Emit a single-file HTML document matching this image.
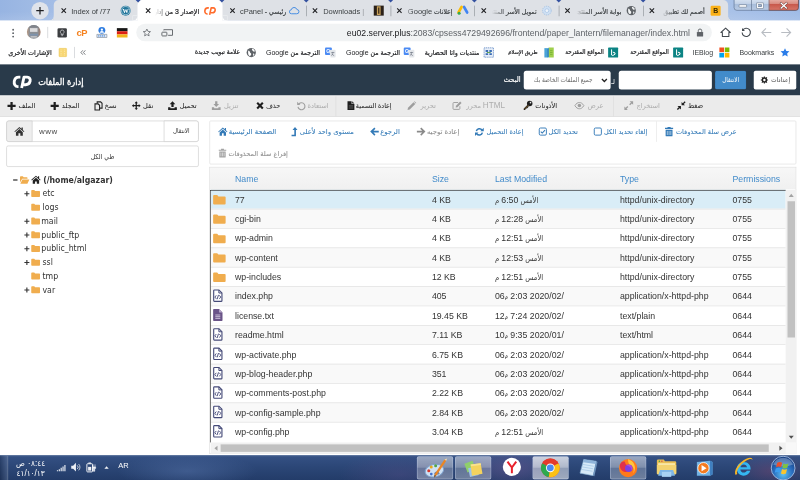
<!DOCTYPE html>
<html lang="ar">
<head>
<meta charset="utf-8">
<title>cPanel File Manager</title>
<style>
*{box-sizing:border-box;margin:0;padding:0}
html,body{width:800px;height:480px;overflow:hidden;background:#fff}
#s{position:absolute;left:0;top:0;width:1280px;height:768px;transform:scale(.625);transform-origin:0 0;overflow:hidden;font-family:"Liberation Sans","DejaVu Sans",sans-serif;font-size:13px;color:#333;background:#fff}
#s div,#s span,#s svg{position:absolute}
.ar{font-family:"Liberation Sans","DejaVu Sans Condensed","DejaVu Sans",sans-serif;font-stretch:condensed;direction:rtl;white-space:nowrap}
.bt.ar,.tt.ar{-webkit-text-stroke:.3px currentColor}
#s span.l{position:static;font-stretch:normal;-webkit-text-stroke:0}
svg{overflow:visible}
/* chrome */
#frame{left:0;top:0;width:1280px;height:33px;background:linear-gradient(180deg,transparent 55%,rgba(255,255,255,.1)),linear-gradient(90deg,#97b4e2 0,#9fbae4 50px,#a3bde6 86px,#a9c2e8 1165px,#a6c0e8 1200px,#9fbbe6 100%)}
#tabsbg{left:86px;top:0;width:1079px;height:33px;background:#dee1e6;border-radius:8px 8px 0 0}
#acttab{left:220px;top:0;width:136px;height:34px;background:#fff;border-radius:8px 8px 0 0}
.tt{top:8.5px;height:18px;line-height:18px;font-size:12px;color:#3c4043;white-space:nowrap;overflow:hidden}
.tx{top:9px;width:16px;height:16px}
.ts{top:9px;width:1px;height:17px;background:#8b9096}
.tri{top:0;width:0;height:0;border-left:4px solid transparent;border-right:4px solid transparent;border-top:4px solid #33509f}
#toolbar{left:0;top:33px;width:1280px;height:35px;background:#fff}
#pill{left:218px;top:38px;width:921px;height:28px;border-radius:14px;background:#f1f3f4}
#url{top:43px;right:176px;height:18px;line-height:18px;font-size:13.9px;color:#5f6368;white-space:nowrap;direction:ltr}
#url b{font-weight:normal;color:#202124}
#bm{left:0;top:68px;width:1280px;height:35px;background:#fff}
.bt{top:75px;height:18px;line-height:18px;font-size:11.2px;color:#3c4043;white-space:nowrap}
.bt.ar{font-size:11px;color:#202124}
.bt .l{font-size:11.2px}
.tt.ar{font-size:11px}
.tt .l{font-size:12px}
/* cpanel */
#cphead{left:0;top:103px;width:1280px;height:50px;background:#293a4a}
#acts{left:0;top:153px;width:1280px;height:34px;background:#ebebeb;border-top:1px solid #f8f8f8;border-bottom:1px solid #dcdcdc}
.a{top:160px;width:200px;text-align:center;height:18px;line-height:18px;font-size:10.6px;color:#222;white-space:nowrap;font-family:"Liberation Sans","DejaVu Sans",sans-serif !important;font-stretch:normal !important;-webkit-text-stroke:.05px currentColor !important}
.a .l{font-size:13px}
.d{color:#adadad}
.vs{top:154px;width:1px;height:32px;background:#dadada}
.nl{height:18px;line-height:18px;font-size:11px;font-family:"DejaVu Sans",sans-serif !important;font-stretch:normal !important;-webkit-text-stroke:.1px currentColor !important;color:#337ab7;white-space:nowrap}
.tr{height:22px;line-height:22px;font-family:"DejaVu Sans","Liberation Sans",sans-serif;font-size:12.5px;color:#333;white-space:nowrap}
.th{top:277px;height:18px;line-height:18px;font-size:14px;color:#428bca;white-space:nowrap}
.row{left:337px;width:920px;height:31px;border-top:1px solid #ddd}
#s span.m{position:static;unicode-bidi:isolate;font-size:9px}
.c.ar{font-size:12px;direction:rtl}
.c .l{font-size:14px}
.c{top:6px;height:18px;line-height:18px;font-size:14px;color:#333;white-space:nowrap}
#taskbar{left:0;top:728px;width:1280px;height:40px;background:linear-gradient(180deg,#9fb0c8 0,#4b6592 1px,#345083 3px,#2b4676 50%,#233c69 100%)}
.tb{top:730px;width:58px;height:37px;border:1px solid rgba(200,215,240,.55);border-radius:3px;background:linear-gradient(180deg,rgba(255,255,255,.5),rgba(255,255,255,.4) 47%,rgba(255,255,255,.26) 52%,rgba(255,255,255,.34))}
</style>
</head>
<body>
<div id="s">
<!-- ===== Browser chrome ===== -->
<div id="frame"></div>
<div id="tabsbg"></div>
<div id="acttab"></div>
<!--TABS-->
<div style="left:78px;top:25px;width:8px;height:8px;background:radial-gradient(circle at 0 0,transparent 7.500px,#dee1e6 8.500px)"></div>
<div style="left:1165px;top:25px;width:8px;height:8px;background:radial-gradient(circle at 100% 0,transparent 7.500px,#dee1e6 8.500px)"></div>
<div style="left:212px;top:25px;width:8px;height:8px;background:#fff"></div>
<div style="left:212px;top:25px;width:8px;height:8px;background:#dee1e6;border-radius:0 0 8px 0"></div>
<div style="left:356px;top:25px;width:8px;height:8px;background:#fff"></div>
<div style="left:356px;top:25px;width:8px;height:8px;background:#dee1e6;border-radius:0 0 0 8px"></div>
<!-- new tab button -->
<div style="left:50px;top:3px;width:28px;height:28px;border-radius:14px;background:#dfe3ea"></div>
<svg style="left:57px;top:10px" width="14" height="14" viewBox="0 0 14 14"><path d="M7 1v12M1 7h12" stroke="#202124" stroke-width="2" fill="none"/></svg>
<!-- tab separators -->
<div class="ts" style="left:490px"></div>
<div class="ts" style="left:625px"></div>
<div class="ts" style="left:759px"></div>
<div class="ts" style="left:894px"></div>
<div class="ts" style="left:1029px"></div>
<div class="tri" style="left:217px"></div>
<div class="tri" style="left:351px"></div>
<div class="tri" style="left:486px"></div>
<div class="tri" style="left:621px"></div>
<div class="tri" style="left:755px"></div>
<div class="tri" style="left:890px"></div>
<div class="tri" style="left:1025px"></div>
<!-- tab 1 -->
<svg class="tx" style="left:94px" viewBox="0 0 16 16"><path d="M4.500 4.500l7 7M11.500 4.500l-7 7" stroke="#202124" stroke-width="1.800" fill="none"/></svg>
<div class="tt" style="left:114px;width:76px">Index of /77</div>
<svg style="left:193px;top:9px" width="16" height="16" viewBox="0 0 16 16"><circle cx="8" cy="8" r="8" fill="#21759b"/><circle cx="8" cy="8" r="6.6" fill="none" stroke="#fff" stroke-width=".8"/><text x="8" y="11.6" font-family="Liberation Serif,serif" font-size="10" font-weight="bold" fill="#fff" text-anchor="middle">W</text></svg>
<!-- tab 2 active -->
<svg class="tx" style="left:229px" viewBox="0 0 16 16"><path d="M4.500 4.500l7 7M11.500 4.500l-7 7" stroke="#202124" stroke-width="1.800" fill="none"/></svg>
<div class="tt ar" style="left:248px;width:71px;color:#202124;-webkit-mask-image:linear-gradient(90deg,transparent 0,#000 22px);mask-image:linear-gradient(90deg,transparent 0,#000 22px)">الإصدار 3 من إدارة</div>
<svg style="left:326px;top:11px" width="20" height="13" viewBox="0 0 31 20"><g fill="none" stroke="#ff6c2c" stroke-width="4" stroke-linejoin="round"><path d="M12.600 2.400H10.200C6.200 2.400 3.500 5 2.800 9c-.700 4.500 1.600 8.500 5.600 8.500h1.200"/><path d="M14.600 19.800L18.400 2.400h5.100c3.500 0 5.500 3 4.700 6.500-.800 3.500-3.700 5.600-7.200 5.600h-3.200"/></g></svg>
<!-- tab 3 -->
<svg class="tx" style="left:364px" viewBox="0 0 16 16"><path d="M4.500 4.500l7 7M11.500 4.500l-7 7" stroke="#202124" stroke-width="1.800" fill="none"/></svg>
<div class="tt ar" style="left:382px;width:76px">رئيسي - <span class="l">cPanel</span></div>
<svg style="left:462px;top:9px" width="17" height="16" viewBox="0 0 17 16"><path d="M4.5 13a3.2 3.2 0 0 1-.4-6.4A4.6 4.6 0 0 1 13 6.2 3.4 3.4 0 0 1 12.8 13z" fill="none" stroke="#4a8fe2" stroke-width="1.6"/></svg>
<!-- tab 4 -->
<svg class="tx" style="left:496px" viewBox="0 0 16 16"><path d="M4.500 4.500l7 7M11.500 4.500l-7 7" stroke="#202124" stroke-width="1.800" fill="none"/></svg>
<div class="tt" style="left:517px;width:70px;-webkit-mask-image:linear-gradient(270deg,transparent 0,#000 12px);mask-image:linear-gradient(270deg,transparent 0,#000 12px)">Downloads | T</div>
<div style="left:598px;top:9px;width:16px;height:16px;background:#2a2018"></div>
<div style="left:603px;top:10px;width:6px;height:14px;background:#c9a25a"></div>
<div style="left:605px;top:12px;width:2px;height:10px;background:#3a2a1a"></div>
<!-- tab 5 -->
<svg class="tx" style="left:631px" viewBox="0 0 16 16"><path d="M4.500 4.500l7 7M11.500 4.500l-7 7" stroke="#202124" stroke-width="1.800" fill="none"/></svg>
<div class="tt ar" style="left:644px;width:80px;-webkit-mask-image:linear-gradient(90deg,transparent 0,#000 16px);mask-image:linear-gradient(90deg,transparent 0,#000 16px)">إعلانات <span class="l">Google</span></div>
<svg style="left:732px;top:9px" width="17" height="16" viewBox="0 0 17 16"><path d="M10.5 2.2L15.5 11" stroke="#4285f4" stroke-width="4.2" stroke-linecap="round"/><path d="M6.5 2.2L1.5 11" stroke="#fbbc04" stroke-width="4.2" stroke-linecap="round"/><circle cx="2.6" cy="12" r="2.4" fill="#34a853"/></svg>
<!-- tab 6 -->
<svg class="tx" style="left:766px" viewBox="0 0 16 16"><path d="M4.500 4.500l7 7M11.500 4.500l-7 7" stroke="#202124" stroke-width="1.800" fill="none"/></svg>
<div class="tt ar" style="left:787px;width:72px;-webkit-mask-image:linear-gradient(90deg,transparent 0,#000 22px);mask-image:linear-gradient(90deg,transparent 0,#000 22px)">تمويل الأسر المنتجة</div>
<svg style="left:867px;top:9px" width="16" height="16" viewBox="0 0 16 16"><circle cx="8" cy="8" r="7" fill="#cfe0f3" stroke="#a9c4e4" stroke-width="1.6" stroke-dasharray="2 1.4"/><circle cx="8" cy="8" r="3" fill="#eef4fb" stroke="#9dbbe0" stroke-width="1"/></svg>
<!-- tab 7 -->
<svg class="tx" style="left:900px" viewBox="0 0 16 16"><path d="M4.500 4.500l7 7M11.500 4.500l-7 7" stroke="#202124" stroke-width="1.800" fill="none"/></svg>
<div class="tt ar" style="left:922px;width:72px;-webkit-mask-image:linear-gradient(90deg,transparent 0,#000 22px);mask-image:linear-gradient(90deg,transparent 0,#000 22px)">بوابة الأسر المنتجه</div>
<svg style="left:1002px;top:9px" width="16" height="16" viewBox="0 0 16 16"><circle cx="8" cy="8" r="7.4" fill="#5f6368"/><path d="M3 5c2 0 3 1 3 2.500s2 1 2 3-1.500 3-2.500 3S3 11 3 9zM9 2c2 0 4 1 4.500 3S12 7 11 6 9 4 9 2zM11 9.500c1.500 0 2 .5 2 1.500s-1 2-2 2z" fill="#f1f3f4"/></svg>
<!-- tab 8 -->
<svg class="tx" style="left:1035px" viewBox="0 0 16 16"><path d="M4.500 4.500l7 7M11.500 4.500l-7 7" stroke="#202124" stroke-width="1.800" fill="none"/></svg>
<div class="tt ar" style="left:1058px;width:70px;-webkit-mask-image:linear-gradient(90deg,transparent 0,#000 22px);mask-image:linear-gradient(90deg,transparent 0,#000 22px)">أصمم لك تطبيق اندرويد</div>
<div style="left:1137px;top:9px;width:16px;height:16px;background:#fbb117;border-radius:2px"></div>
<div style="left:1137px;top:9px;width:16px;height:16px;line-height:16px;text-align:center;font-size:11px;font-weight:bold;color:#3a2a00">B</div>
<!-- window controls -->
<div style="left:1174px;top:-3px;width:104px;height:20px;border:1px solid #5d6f8a;border-radius:0 0 5px 5px;background:linear-gradient(180deg,#d9e4f2 0,#c1d1e7 45%,#a9bedb 50%,#b9cbe4 100%)"></div>
<div style="left:1230px;top:-3px;width:48px;height:20px;border:1px solid #6e3b38;border-radius:0 0 5px 0;background:linear-gradient(180deg,#e8b5ac 0,#d98a7f 45%,#c8594c 50%,#d77466 100%)"></div>
<div style="left:1202px;top:0;width:1px;height:17px;background:#5d6f8a"></div>
<div style="left:1182px;top:7px;width:13px;height:5px;background:#fff;border:1px solid #6b7b92;border-radius:1px"></div>
<div style="left:1210px;top:4px;width:12px;height:10px;background:#fff;border:1px solid #6b7b92;border-radius:1px"></div>
<div style="left:1213px;top:7px;width:6px;height:4px;background:#9fb2cf;border:1px solid #6b7b92"></div>
<svg style="left:1248px;top:4px" width="12" height="10" viewBox="0 0 14 12"><path d="M2 1.500l10 9M12 1.500l-10 9" stroke="#5a3030" stroke-width="4.200" stroke-linecap="square"/><path d="M2 1.500l10 9M12 1.500l-10 9" stroke="#fff" stroke-width="2.600" stroke-linecap="square"/></svg>
<!--/TABS-->
<div id="toolbar"></div>
<div id="pill"></div>
<!--TOOLBAR-->
<!-- menu dots -->
<svg style="left:17px;top:45px" width="8" height="16" viewBox="0 0 8 16"><circle cx="4" cy="2.500" r="1.500" fill="#5f6368"/><circle cx="4" cy="8" r="1.500" fill="#5f6368"/><circle cx="4" cy="13.500" r="1.500" fill="#5f6368"/></svg>
<!-- avatar -->
<div style="left:43px;top:40px;width:22px;height:22px;border-radius:11px;overflow:hidden;background:linear-gradient(90deg,#b89a84 0,#8b8f95 22%,#8b8f95 78%,#a57f6e 100%)"><div style="left:0;top:0;width:22px;height:4px;background:#80848b"></div><div style="left:5px;top:5px;width:12px;height:6px;background:#dcdcde"></div><div style="left:4px;top:14px;width:14px;height:3px;background:#7e93ad"></div><div style="left:6px;top:18px;width:10px;height:2px;background:#d0d0d2"></div></div>
<div style="left:76px;top:43px;width:1px;height:18px;background:#c4c7cc"></div>
<!-- extension: dark bulb -->
<div style="left:92px;top:45px;width:15px;height:15px;background:#3b3d40;border-radius:2px"></div>
<svg style="left:95px;top:47px" width="9" height="11" viewBox="0 0 11 13"><path d="M5.500 1a3.600 3.600 0 0 0-2 6.600V10h4V7.600a3.600 3.600 0 0 0-2-6.600z" fill="none" stroke="#e8eaed" stroke-width="1.300"/><path d="M4 12h3" stroke="#e8eaed" stroke-width="1.200"/></svg>
<!-- extension: cP -->
<svg style="left:120px;top:44px" width="22" height="16" viewBox="0 0 22 16"><text x="11" y="13.500" font-family="Liberation Sans,sans-serif" font-size="15" font-weight="bold" fill="#f58220" text-anchor="middle" letter-spacing="-.5">cP</text></svg>
<!-- extension: blue person -->
<svg style="left:154px;top:42px" width="18" height="20" viewBox="0 0 18 20"><circle cx="9" cy="6.500" r="5.500" fill="#2f7de1"/><circle cx="9" cy="5.500" r="1.800" fill="#fff"/><path d="M5.500 10.500a3.500 3 0 0 1 7 0z" fill="#fff"/><path d="M1 13h16v5H1z" fill="#e4e9f0" stroke="#7d8a9c" stroke-width="1"/><path d="M3 15.500h12" stroke="#2f7de1" stroke-width="1.600" stroke-dasharray="2 1"/></svg>
<!-- extension: flag -->
<div style="left:187px;top:45px;width:17px;height:5px;background:#161616"></div>
<div style="left:187px;top:50px;width:17px;height:5px;background:#dd1f14"></div>
<div style="left:187px;top:55px;width:17px;height:5px;background:#f2b41b"></div>
<!-- star + media -->
<svg style="left:228px;top:45px" width="14" height="14" viewBox="0 0 16 16"><path d="M8 1.600l1.950 4.300 4.650.5-3.500 3.150 1 4.600L8 11.800l-4.100 2.350 1-4.600-3.500-3.150 4.650-.5z" fill="none" stroke="#5f6368" stroke-width="1.400" stroke-linejoin="round"/></svg>
<svg style="left:258px;top:46px" width="19" height="13" viewBox="0 0 19 13"><path d="M4 2.500V1.500h14v9h-7" fill="none" stroke="#5f6368" stroke-width="1.500"/><rect x="1" y="5.500" width="8" height="6" rx="1" fill="none" stroke="#5f6368" stroke-width="1.500"/></svg>
<!-- url -->
<div id="url"><b>eu02.server.plus</b>:2083/cpsess4729492696/frontend/paper_lantern/filemanager/index.html</div>
<!-- lock -->
<svg style="left:1114px;top:45px" width="12" height="14" viewBox="0 0 12 14"><rect x="1" y="6" width="10" height="7.500" rx="1" fill="#5f6368"/><path d="M3.200 6V4.200a2.800 2.800 0 0 1 5.600 0V6" fill="none" stroke="#5f6368" stroke-width="1.500"/></svg>
<!-- home -->
<svg style="left:1151px;top:42px" width="20" height="20" viewBox="0 0 20 20"><path d="M2.500 10L10 3l7.500 7h-2.300v6.500H4.800V10z" fill="none" stroke="#444a50" stroke-width="1.700" stroke-linejoin="round"/></svg>
<!-- reload -->
<svg style="left:1184px;top:42px" width="20" height="20" viewBox="0 0 20 20"><path d="M4.300 6.500A6.600 6.600 0 1 1 3.400 10" fill="none" stroke="#444a50" stroke-width="1.800"/><path d="M3.200 2.800v4.800H8z" fill="#444a50"/></svg>
<!-- back / forward (disabled) -->
<svg style="left:1216px;top:43px" width="20" height="18" viewBox="0 0 20 18"><path d="M18 9H3M9.500 2.500L3 9l6.500 6.500" fill="none" stroke="#b8bcc2" stroke-width="1.700"/></svg>
<svg style="left:1248px;top:43px" width="20" height="18" viewBox="0 0 20 18"><path d="M2 9h15M10.500 2.500L17 9l-6.500 6.500" fill="none" stroke="#b8bcc2" stroke-width="1.700"/></svg>
<!--/TOOLBAR-->
<div id="bm"></div>
<!--BOOKMARKS-->
<!-- right to left -->
<svg style="left:1248px;top:76px" width="16" height="16" viewBox="0 0 16 16"><path d="M8 1l2.100 4.600 5 .55-3.750 3.400 1.050 4.950L8 12l-4.400 2.500 1.050-4.950L.9 6.150l5-.55z" fill="#2b7de9"/></svg>
<div class="bt" style="left:1183px">Bookmarks</div>
<svg style="left:1151px;top:76px" width="16" height="16" viewBox="0 0 16 16"><rect x="0" y="0" width="7.400" height="7.400" fill="#f25022"/><rect x="8.600" y="0" width="7.400" height="7.400" fill="#7fba00"/><rect x="0" y="8.600" width="7.400" height="7.400" fill="#00a4ef"/><rect x="8.600" y="8.600" width="7.400" height="7.400" fill="#ffb900"/></svg>
<div class="bt" style="left:1108px">IEBlog</div>
<svg style="left:1077px;top:76px" width="16" height="16" viewBox="0 0 16 16"><rect width="16" height="16" rx="1" fill="#0c8484"/><path d="M5.500 3v9l2 .800 3.500-2V8.600L7.500 7.400" fill="none" stroke="#fff" stroke-width="1.600"/></svg>
<div class="bt ar" style="right:210px;font-size:9.900px">المواقع المقترحة</div>
<svg style="left:973px;top:76px" width="16" height="16" viewBox="0 0 16 16"><rect width="16" height="16" rx="1" fill="#0c8484"/><path d="M5.500 3v9l2 .800 3.500-2V8.600L7.500 7.400" fill="none" stroke="#fff" stroke-width="1.600"/></svg>
<div class="bt ar" style="right:314px;font-size:9.900px">المواقع المقترحة</div>
<svg style="left:870px;top:75px" width="17" height="18" viewBox="0 0 17 18"><rect x="1" y="2" width="7" height="15" fill="#4aa3d8"/><rect x="8" y="1" width="8" height="16" fill="#9fcf4d"/><path d="M8 1l-2 3v13l2-2z" fill="#2d7fb4"/><path d="M10 6h4M10 9h4M10 12h4" stroke="#6aa62b" stroke-width="1"/></svg>
<div class="bt ar" style="right:420px;font-size:9.200px">طريق الإسلام</div>
<svg style="left:774px;top:76px" width="16" height="16" viewBox="0 0 16 16"><rect x=".5" y=".5" width="15" height="15" fill="#e7eef8" stroke="#3b6cb5" stroke-width="1" stroke-dasharray="2 1"/><path d="M3 4h4v3H3zM9 4h4v3H9zM3 9h4v3H3zM9 9h4v3H9z" fill="#3b6cb5"/><path d="M5 8h6" stroke="#59a14a" stroke-width="1.500"/></svg>
<div class="bt ar" style="right:513px">منتديات واتا الحضارية</div>
<svg style="left:646px;top:76px" width="17" height="16" viewBox="0 0 17 16"><rect x="0" y="0" width="11" height="12" rx="1.500" fill="#4a8af4"/><path d="M6.500 4l9-.5a1.500 1.500 0 0 1 1.500 1.500v9.500a1.500 1.500 0 0 1-1.500 1.500H9z" fill="#e3e6ea"/><text x="5" y="9" font-family="Liberation Sans,sans-serif" font-size="8" font-weight="bold" fill="#fff" text-anchor="middle">G</text><path d="M10 8h5M12.500 7v1.500c0 2-1 3.500-2.500 4.500M11 10c.8 1.500 2 2.600 3.600 3" stroke="#6b7280" stroke-width="1" fill="none"/></svg>
<div class="bt ar" style="right:640px">الترجمة من <span class="l">Google</span></div>
<svg style="left:520px;top:76px" width="17" height="16" viewBox="0 0 17 16"><rect x="0" y="0" width="11" height="12" rx="1.500" fill="#4a8af4"/><path d="M6.500 4l9-.5a1.500 1.500 0 0 1 1.500 1.500v9.500a1.500 1.500 0 0 1-1.500 1.500H9z" fill="#e3e6ea"/><text x="5" y="9" font-family="Liberation Sans,sans-serif" font-size="8" font-weight="bold" fill="#fff" text-anchor="middle">G</text><path d="M10 8h5M12.500 7v1.500c0 2-1 3.500-2.500 4.500M11 10c.8 1.500 2 2.600 3.600 3" stroke="#6b7280" stroke-width="1" fill="none"/></svg>
<div class="bt ar" style="right:768px">الترجمة من <span class="l">Google</span></div>
<svg style="left:394px;top:76px" width="16" height="16" viewBox="0 0 16 16"><circle cx="8" cy="8" r="7.400" fill="#5f6368"/><path d="M3 5c2 0 3 1 3 2.500s2 1 2 3-1.500 3-2.500 3S3 11 3 9zM9 2c2 0 4 1 4.500 3S12 7 11 6 9 4 9 2zM11 9.500c1.500 0 2 .5 2 1.500s-1 2-2 2z" fill="#fff"/></svg>
<div class="bt ar" style="right:896px;font-size:10.400px">علامة تبويب جديدة</div>
<!-- left side -->
<svg style="left:128px;top:79px" width="10" height="10" viewBox="0 0 10 10"><path d="M4.500 1.500L1.500 5l3 3.500M8.500 1.500L5.500 5l3 3.500" fill="none" stroke="#5f6368" stroke-width="1.300"/></svg>
<div style="left:119px;top:75px;width:1px;height:18px;background:#c4c7cc"></div>
<svg style="left:94px;top:77px" width="13" height="14" viewBox="0 0 14 18" preserveAspectRatio="none"><rect x=".5" y=".5" width="13" height="17" rx="1" fill="#f8d775" stroke="#edc85a" stroke-width="1"/><path d="M4 3v12M10 3v12" stroke="#fdf0c0" stroke-width="1.500" stroke-dasharray="1.500 2"/></svg>
<div class="bt ar" style="left:13px;font-size:11.400px">الإشارات الأخرى</div>
<!--/BOOKMARKS-->
<!-- ===== cPanel ===== -->
<div id="cphead"></div>
<!--HEADER-->
<!-- cP logo -->
<svg style="left:20px;top:121px" width="31" height="20" viewBox="0 0 31 20"><g fill="none" stroke="#fff" stroke-width="4.600" stroke-linejoin="round"><path d="M12.600 2.400H10.200C6.200 2.400 3.500 5 2.800 9c-.700 4.500 1.600 8.500 5.600 8.500h1.200"/><path d="M14.600 19.800L18.400 2.400h5.100c3.500 0 5.500 3 4.700 6.500-.800 3.500-3.700 5.600-7.200 5.600h-3.200"/></g></svg>
<div class="ar" style="left:61px;top:120px;height:22px;line-height:22px;font-size:14.500px;color:#fff;-webkit-text-stroke:.5px #fff">إدارة الملفات</div>
<!-- search area -->
<div class="ar" style="left:806px;top:118px;height:18px;line-height:18px;font-size:12px;color:#fff;-webkit-text-stroke:.3px #fff">البحث</div>
<div style="left:838px;top:113px;width:139px;height:30px;background:#fff;border-radius:4px"></div>
<div class="ar" style="right:332px;top:119px;height:18px;line-height:18px;font-size:10.200px;color:#666;-webkit-text-stroke:0">جميع الملفات الخاصة بك</div>
<svg style="left:962px;top:125px" width="10" height="8" viewBox="0 0 10 8"><path d="M1 1.500l4 4 4-4" fill="none" stroke="#222" stroke-width="2"/></svg>
<div class="ar" style="left:978px;top:121px;height:18px;line-height:18px;font-size:11px;color:#fff">لـ</div>
<div style="left:990px;top:113px;width:149px;height:30px;background:#fff;border-radius:4px"></div>
<div style="left:1144px;top:113px;width:50px;height:30px;background:#428bca;border:1px dotted #2b6aa6;border-radius:3px"></div>
<div class="ar" style="left:1144px;width:50px;text-align:center;top:119px;height:18px;line-height:18px;font-size:10px;color:#fff">الانتقال</div>
<div style="left:1206px;top:113px;width:68px;height:30px;background:#fff;border-radius:3px"></div>
<div class="ar" style="right:16px;top:119px;height:18px;line-height:18px;font-size:10px;color:#333">إعدادات</div>
<svg style="left:1217px;top:122px" width="12" height="12" viewBox="0 0 13 13"><circle cx="6.500" cy="6.500" r="3.500" fill="none" stroke="#222" stroke-width="2.400"/><path d="M6.500 .300v12.400M.300 6.500h12.400M2.100 2.100l8.800 8.800M10.900 2.100l-8.800 8.800" stroke="#222" stroke-width="1.900"/><circle cx="6.500" cy="6.500" r="2.100" fill="#fff"/></svg>
<!--/HEADER-->
<div id="acts"></div>
<!--ACTIONS-->
<div class="vs" style="left:537px"></div>
<div class="vs" style="left:981px"></div>
<!-- 1 file -->
<svg style="left:12px;top:163px" width="13" height="13" viewBox="0 0 13 13"><path d="M6.500 0v13M0 6.500h13" stroke="#1e1e1e" stroke-width="3.600"/></svg>
<div class="a ar" style="left:-57px">الملف</div>
<!-- 2 folder -->
<svg style="left:81px;top:163px" width="13" height="13" viewBox="0 0 13 13"><path d="M6.500 0v13M0 6.500h13" stroke="#1e1e1e" stroke-width="3.600"/></svg>
<div class="a ar" style="left:13px">المجلد</div>
<!-- 3 copy -->
<svg style="left:151px;top:162px" width="13" height="15" viewBox="0 0 13 15"><path d="M4.500 3.500V1h5.500l2.300 2.300v7.700H8.500" fill="none" stroke="#222" stroke-width="1.700"/><path d="M1 4.200h5l2.300 2.300v7.500H1z" fill="#ebebeb" stroke="#222" stroke-width="1.700"/></svg>
<div class="a ar" style="left:77px">نسخ</div>
<!-- 4 move -->
<svg style="left:211px;top:162px" width="14" height="14" viewBox="0 0 14 14"><path d="M7 0l2.600 3H8v3h3V4.400L14 7l-3 2.600V8H8v3h1.600L7 14l-2.600-3H6V8H3v1.600L0 7l3-2.600V6h3V3H4.400z" fill="#1e1e1e"/></svg>
<div class="a ar" style="left:137px">نقل</div>
<!-- 5 upload -->
<svg style="left:269px;top:162px" width="14" height="14" viewBox="0 0 14 14"><path d="M7 0l4.500 4.800H8.800v4.400H5.200V4.800H2.500z" fill="#1e1e1e"/><path d="M0 9.500h3.600v1.600h6.800V9.500H14V14H0z" fill="#1e1e1e"/></svg>
<div class="a ar" style="left:201px">تحميل</div>
<!-- 6 download (disabled) -->
<svg style="left:339px;top:162px" width="14" height="14" viewBox="0 0 14 14"><path d="M7 9.200L2.500 4.400h2.700V0h3.600v4.400h2.700z" fill="#9e9e9e"/><path d="M0 9.500h3.600v1.600h6.800V9.500H14V14H0z" fill="#9e9e9e"/></svg>
<div class="a ar d" style="left:270px">تنزيل</div>
<!-- 7 delete -->
<svg style="left:410px;top:163px" width="12" height="12" viewBox="0 0 12 12"><path d="M1.500 1.500l9 9M10.500 1.500l-9 9" stroke="#1e1e1e" stroke-width="3.400"/></svg>
<div class="a ar" style="left:337px">حذف</div>
<!-- 8 restore (disabled) -->
<svg style="left:475px;top:162px" width="14" height="14" viewBox="0 0 14 14"><path d="M3.200 4.200A5.600 5.600 0 1 1 1.800 9" fill="none" stroke="#9e9e9e" stroke-width="1.800"/><path d="M.500 .800v5h5z" fill="#9e9e9e"/></svg>
<div class="a ar d" style="left:409px">استعادة</div>
<!-- 9 rename -->
<svg style="left:556px;top:162px" width="11" height="14" viewBox="0 0 11 14"><path d="M0 0h6.500v4.500H11V14H0z" fill="#1e1e1e"/><path d="M7.500 0L11 3.500H7.500z" fill="#1e1e1e"/><path d="M2 7h7M2 9h7M2 11h7" stroke="#777" stroke-width=".800"/></svg>
<div class="a ar" style="left:498px;font-size:10.200px">إعادة التسمية</div>
<!-- 10 edit (disabled) -->
<svg style="left:652px;top:162px" width="14" height="14" viewBox="0 0 14 14"><path d="M0 14l.800-3.600L9.600 1.600l2.800 2.800L3.600 13.200z" fill="#9e9e9e"/><path d="M10.500.700l.800-.700 2.700 2.700-.700.800z" fill="#9e9e9e"/></svg>
<div class="a ar d" style="left:585px">تحرير</div>
<!-- 11 html editor (disabled) -->
<svg style="left:724px;top:162px" width="15" height="14" viewBox="0 0 15 14"><path d="M9 2H2.200A1.400 1.400 0 0 0 .800 3.400v8.200A1.400 1.400 0 0 0 2.200 13h8.200a1.400 1.400 0 0 0 1.400-1.400V8" fill="none" stroke="#9e9e9e" stroke-width="1.500"/><path d="M5 10l.600-2.800L12.300.500l2.200 2.200-6.700 6.700z" fill="#9e9e9e"/></svg>
<div class="a ar d" style="left:677px"><span class="l">HTML</span> محرر</div>
<!-- 12 permissions -->
<svg style="left:837px;top:161px" width="15" height="15" viewBox="0 0 15 15"><circle cx="10.500" cy="4.500" r="4.400" fill="#1e1e1e"/><circle cx="11.800" cy="3.200" r="1.300" fill="#ededed"/><path d="M7.500 6.200L1 12.700V15h2.600v-1.500h1.500V12h1.500l2.300-2.300z" fill="#1e1e1e"/><path d="M8.200 7.500L2 13.700" stroke="#c98a2b" stroke-width=".9"/></svg>
<div class="a ar" style="left:774px">الأذونات</div>
<!-- 13 view (disabled) -->
<svg style="left:919px;top:163px" width="16" height="12" viewBox="0 0 16 12"><path d="M.800 6C3 2.400 5.400 1 8 1s5 1.400 7.200 5C13 9.600 10.600 11 8 11S3 9.600.800 6z" fill="none" stroke="#9e9e9e" stroke-width="1.500"/><circle cx="8" cy="5.800" r="2.800" fill="#9e9e9e"/></svg>
<div class="a ar d" style="left:853px">عرض</div>
<!-- 14 extract (disabled) -->
<svg style="left:999px;top:162px" width="14" height="14" viewBox="0 0 14 14"><path d="M8.500 0H14v5.500l-2-2-2.800 2.800-1.500-1.500 2.800-2.800zM5.500 14H0V8.500l2 2 2.800-2.800 1.500 1.500-2.800 2.800z" fill="#9e9e9e"/></svg>
<div class="a ar d" style="left:937px">استخراج</div>
<!-- 15 compress -->
<svg style="left:1083px;top:162px" width="14" height="14" viewBox="0 0 14 14"><path d="M7.500 6.500V1l2 2L12.500 0 14 1.500 11 4.500l2 2zM6.500 7.500V13l-2-2L1.500 14 0 12.500l3-3-2-2z" fill="#1e1e1e"/></svg>
<div class="a ar" style="left:1013px">ضغط</div>
<!--/ACTIONS-->
<!--LEFT-->
<!-- path input group -->
<div style="left:10px;top:193px;width:308px;height:34px;border:1px solid #ccc;border-radius:4px;background:#fff"></div>
<div style="left:10px;top:193px;width:42px;height:34px;border:1px solid #ccc;border-radius:4px 0 0 4px;background:#eee"></div>
<div style="left:262px;top:193px;width:56px;height:34px;border:1px solid #ccc;border-radius:0 4px 4px 0;background:#fff"></div>
<svg style="left:23px;top:203px" width="16" height="14" viewBox="0 0 16 14"><path d="M8 0L0 7.200l1 1.100L8 2l7 6.300 1-1.100-2.500-2.300V1h-2v2.100z" fill="#333"/><path d="M8 3.500L2.500 8.400V14h4v-4h3v4h4V8.400z" fill="#333"/></svg>
<div style="left:62px;top:202px;height:18px;line-height:18px;font-family:'DejaVu Sans',sans-serif;font-size:12.300px;color:#555">www</div>
<div class="ar" style="left:262px;width:56px;text-align:center;top:201px;height:18px;line-height:18px;font-size:10px;color:#333">الانتقال</div>
<!-- collapse all -->
<div style="left:10px;top:233px;width:308px;height:34px;border:1px solid #ccc;border-radius:3px;background:#fff"></div>
<div class="ar" style="left:10px;width:308px;text-align:center;top:241px;height:18px;line-height:18px;font-size:11px;color:#333">طي الكل</div>
<!-- tree root -->
<div style="left:21px;top:287px;width:7px;height:2px;background:#333"></div>
<svg style="left:32px;top:282px" width="15" height="12" viewBox="0 0 15 12"><path d="M0 1.200A1.200 1.200 0 0 1 1.200 0h3.300l1.300 1.500h5a1.200 1.200 0 0 1 1.200 1.200V4H3.500L0 10z" fill="#f0ad4e"/><path d="M3.800 5H15l-3.200 7H.500z" fill="#f0ad4e"/></svg>
<svg style="left:50px;top:281px" width="15" height="13" viewBox="0 0 16 14"><path d="M8 0L0 7.200l1 1.100L8 2l7 6.300 1-1.100-2.500-2.300V1h-2v2.100z" fill="#222"/><path d="M8 3.500L2.500 8.400V14h4v-4h3v4h4V8.400z" fill="#222"/></svg>
<div class="tr" style="left:69px;top:277px;font-weight:bold;color:#333">(/home/algazar)</div>
<!-- children -->
<svg style="left:39px;top:306px" width="8" height="8" viewBox="0 0 8 8"><path d="M4 0v8M0 4h8" stroke="#333" stroke-width="1.800"/></svg>
<svg style="left:50px;top:304px" width="14" height="11" viewBox="0 0 14 12" preserveAspectRatio="none"><path d="M0 1.200A1.200 1.200 0 0 1 1.200 0h3.600l1.400 1.600h6.600A1.200 1.200 0 0 1 14 2.800v8A1.200 1.200 0 0 1 12.800 12H1.200A1.200 1.200 0 0 1 0 10.800z" fill="#f0ad4e"/></svg>
<div class="tr" style="left:68px;top:299px">etc</div>
<svg style="left:50px;top:326px" width="14" height="11" viewBox="0 0 14 12" preserveAspectRatio="none"><path d="M0 1.200A1.200 1.200 0 0 1 1.200 0h3.600l1.400 1.600h6.600A1.200 1.200 0 0 1 14 2.800v8A1.200 1.200 0 0 1 12.800 12H1.200A1.200 1.200 0 0 1 0 10.800z" fill="#f0ad4e"/></svg>
<div class="tr" style="left:68px;top:321px">logs</div>
<svg style="left:39px;top:350px" width="8" height="8" viewBox="0 0 8 8"><path d="M4 0v8M0 4h8" stroke="#333" stroke-width="1.800"/></svg>
<svg style="left:50px;top:348px" width="14" height="11" viewBox="0 0 14 12" preserveAspectRatio="none"><path d="M0 1.200A1.200 1.200 0 0 1 1.200 0h3.600l1.400 1.600h6.600A1.200 1.200 0 0 1 14 2.800v8A1.200 1.200 0 0 1 12.800 12H1.200A1.200 1.200 0 0 1 0 10.800z" fill="#f0ad4e"/></svg>
<div class="tr" style="left:66px;top:343px">mail</div>
<svg style="left:39px;top:372px" width="8" height="8" viewBox="0 0 8 8"><path d="M4 0v8M0 4h8" stroke="#333" stroke-width="1.800"/></svg>
<svg style="left:50px;top:370px" width="14" height="11" viewBox="0 0 14 12" preserveAspectRatio="none"><path d="M0 1.200A1.200 1.200 0 0 1 1.200 0h3.600l1.400 1.600h6.600A1.200 1.200 0 0 1 14 2.800v8A1.200 1.200 0 0 1 12.800 12H1.200A1.200 1.200 0 0 1 0 10.800z" fill="#f0ad4e"/></svg>
<div class="tr" style="left:66px;top:365px">public_ftp</div>
<svg style="left:39px;top:394px" width="8" height="8" viewBox="0 0 8 8"><path d="M4 0v8M0 4h8" stroke="#333" stroke-width="1.800"/></svg>
<svg style="left:50px;top:392px" width="14" height="11" viewBox="0 0 14 12" preserveAspectRatio="none"><path d="M0 1.200A1.200 1.200 0 0 1 1.200 0h3.600l1.400 1.600h6.600A1.200 1.200 0 0 1 14 2.800v8A1.200 1.200 0 0 1 12.800 12H1.200A1.200 1.200 0 0 1 0 10.800z" fill="#f0ad4e"/></svg>
<div class="tr" style="left:66px;top:387px">public_html</div>
<svg style="left:39px;top:416px" width="8" height="8" viewBox="0 0 8 8"><path d="M4 0v8M0 4h8" stroke="#333" stroke-width="1.800"/></svg>
<svg style="left:50px;top:414px" width="14" height="11" viewBox="0 0 14 12" preserveAspectRatio="none"><path d="M0 1.200A1.200 1.200 0 0 1 1.200 0h3.600l1.400 1.600h6.600A1.200 1.200 0 0 1 14 2.800v8A1.200 1.200 0 0 1 12.800 12H1.200A1.200 1.200 0 0 1 0 10.800z" fill="#f0ad4e"/></svg>
<div class="tr" style="left:68px;top:409px">ssl</div>
<svg style="left:50px;top:436px" width="14" height="11" viewBox="0 0 14 12" preserveAspectRatio="none"><path d="M0 1.200A1.200 1.200 0 0 1 1.200 0h3.600l1.400 1.600h6.600A1.200 1.200 0 0 1 14 2.800v8A1.200 1.200 0 0 1 12.800 12H1.200A1.200 1.200 0 0 1 0 10.800z" fill="#f0ad4e"/></svg>
<div class="tr" style="left:68px;top:431px">tmp</div>
<svg style="left:39px;top:460px" width="8" height="8" viewBox="0 0 8 8"><path d="M4 0v8M0 4h8" stroke="#333" stroke-width="1.800"/></svg>
<svg style="left:50px;top:458px" width="14" height="11" viewBox="0 0 14 12" preserveAspectRatio="none"><path d="M0 1.200A1.200 1.200 0 0 1 1.200 0h3.600l1.400 1.600h6.600A1.200 1.200 0 0 1 14 2.800v8A1.200 1.200 0 0 1 12.800 12H1.200A1.200 1.200 0 0 1 0 10.800z" fill="#f0ad4e"/></svg>
<div class="tr" style="left:68px;top:453px">var</div>
<!--/LEFT-->
<!--RIGHT-->
<!-- nav box -->
<div style="left:335px;top:193px;width:939px;height:70px;border:1px solid #ddd;border-radius:2px;background:#fff"></div>
<div style="left:1050px;top:194px;width:1px;height:33px;background:#e4e4e4"></div>
<!-- home -->
<svg style="left:349px;top:204px" width="15" height="13" viewBox="0 0 16 14"><path d="M8 0L0 7.200l1 1.100L8 2l7 6.300 1-1.100-2.500-2.300V1h-2v2.100z" fill="#337ab7"/><path d="M8 3.500L2.500 8.400V14h4v-4h3v4h4V8.400z" fill="#337ab7"/></svg>
<div class="nl ar" style="left:304px;width:200px;text-align:center;top:202px">الصفحة الرئيسية</div>
<!-- up one level -->
<svg style="left:466px;top:203px" width="10" height="15" viewBox="0 0 10 15"><path d="M6 0l4 5H7.500v10H.500v-2.600h4.400V5H2z" fill="#337ab7"/></svg>
<div class="nl ar" style="left:423px;width:200px;text-align:center;top:202px">مستوى واحد لأعلى</div>
<!-- back -->
<svg style="left:592px;top:204px" width="14" height="13" viewBox="0 0 14 13"><path d="M14 5H5.500L8.700 1.800 7 0 .300 6.500 7 13l1.700-1.800L5.500 8H14z" fill="#337ab7"/></svg>
<div class="nl ar" style="left:524px;width:200px;text-align:center;top:202px">الرجوع</div>
<!-- forward (disabled) -->
<svg style="left:667px;top:204px" width="14" height="13" viewBox="0 0 14 13"><path d="M0 5h8.500L5.300 1.800 7 0l6.700 6.500L7 13l-1.700-1.800L8.500 8H0z" fill="#8a8a8a"/></svg>
<div class="nl ar" style="left:609px;width:200px;text-align:center;top:202px;color:#8a8a8a">إعادة توجيه</div>
<!-- reload -->
<svg style="left:760px;top:204px" width="14" height="14" viewBox="0 0 14 14"><path d="M2.200 5.800A5 5 0 0 1 11.200 4.100M11.800 8.200A5 5 0 0 1 2.800 9.900" fill="none" stroke="#337ab7" stroke-width="2.500"/><path d="M14 .500v5.500H8.500zM0 13.500V8h5.500z" fill="#337ab7"/></svg>
<div class="nl ar" style="left:708px;width:200px;text-align:center;font-size:10.500px;top:202px">إعادة التحميل</div>
<!-- select all -->
<svg style="left:862px;top:204px" width="13" height="13" viewBox="0 0 13 13"><rect x=".800" y=".800" width="11.400" height="11.400" rx="2" fill="none" stroke="#337ab7" stroke-width="1.500"/><path d="M3.200 6.500l2.400 2.400L10 4.200" fill="none" stroke="#337ab7" stroke-width="1.700"/></svg>
<div class="nl ar" style="left:801px;width:200px;text-align:center;font-size:10.500px;top:202px">تحديد الكل</div>
<!-- unselect all -->
<svg style="left:950px;top:204px" width="13" height="13" viewBox="0 0 13 13"><rect x=".800" y=".800" width="11.400" height="11.400" rx="2" fill="none" stroke="#337ab7" stroke-width="1.500"/></svg>
<div class="nl ar" style="left:901px;width:200px;text-align:center;font-size:10.500px;top:202px">إلغاء تحديد الكل</div>
<!-- view trash -->
<svg style="left:1064px;top:203px" width="13" height="15" viewBox="0 0 13 15"><path d="M4 0h5v1.500h4V3.500H0V1.500h4z" fill="#337ab7"/><path d="M1 4.500h11V14a1 1 0 0 1-1 1H2a1 1 0 0 1-1-1z" fill="#337ab7"/><path d="M3.700 6.500v6.500M6.500 6.500v6.500M9.300 6.500v6.500" stroke="#fff" stroke-width=".900"/></svg>
<div class="nl ar" style="left:1030px;width:200px;text-align:center;font-size:10.500px;top:202px">عرض سلة المحذوفات</div>
<!-- empty trash (disabled) -->
<svg style="left:350px;top:238px" width="12" height="14" viewBox="0 0 13 15"><path d="M4 0h5v1.500h4V3.500H0V1.500h4z" fill="#a3a3a3"/><path d="M1 4.500h11V14a1 1 0 0 1-1 1H2a1 1 0 0 1-1-1z" fill="#a3a3a3"/><path d="M3.700 6.500v6.500M6.500 6.500v6.500M9.300 6.500v6.500" stroke="#fff" stroke-width=".900"/></svg>
<div class="nl ar" style="left:313px;width:200px;text-align:center;font-size:10.500px;top:236px;color:#8a8a8a">إفراغ سلة المحذوفات</div>
<!-- table header -->
<div style="left:335px;top:267px;width:939px;height:37px;border:1px solid #ddd;border-bottom:none;background:linear-gradient(180deg,#f7f7f7,#f0f0f0)"></div>
<div class="th" style="left:376px">Name</div>
<div class="th" style="left:691px">Size</div>
<div class="th" style="left:792px">Last Modified</div>
<div class="th" style="left:992px">Type</div>
<div class="th" style="left:1172px">Permissions</div>
<!-- table body frame -->
<div style="left:335px;top:303px;width:939px;height:423px;border:1px solid #ddd;border-top:none;background:#fff"></div>
<!-- rows -->
<div class="row" style="top:303px;background:#d9edf7"><svg style="left:4px;top:8px" width="20" height="15" viewBox="0 0 20 15"><path d="M0 1.500A1.500 1.500 0 0 1 1.500 0h5l2 2.200h10A1.500 1.500 0 0 1 20 3.700v9.800a1.500 1.500 0 0 1-1.500 1.500h-17A1.500 1.500 0 0 1 0 13.500z" fill="#f0ad4e"/></svg><div class="c" style="left:39px">77</div><div class="c" style="left:354px">4 KB</div><div class="c ar" style="left:455px">الأمس <span class="l">6:50</span> م</div><div class="c" style="left:655px">httpd/unix-directory</div><div class="c" style="left:835px">0755</div></div>
<div class="row" style="top:334px;background:#f9f9f9"><svg style="left:4px;top:8px" width="20" height="15" viewBox="0 0 20 15"><path d="M0 1.500A1.500 1.500 0 0 1 1.500 0h5l2 2.200h10A1.500 1.500 0 0 1 20 3.700v9.800a1.500 1.500 0 0 1-1.500 1.500h-17A1.500 1.500 0 0 1 0 13.500z" fill="#f0ad4e"/></svg><div class="c" style="left:39px">cgi-bin</div><div class="c" style="left:354px">4 KB</div><div class="c ar" style="left:455px">الأمس <span class="l">12:28</span> م</div><div class="c" style="left:655px">httpd/unix-directory</div><div class="c" style="left:835px">0755</div></div>
<div class="row" style="top:365px;background:#fff"><svg style="left:4px;top:8px" width="20" height="15" viewBox="0 0 20 15"><path d="M0 1.500A1.500 1.500 0 0 1 1.500 0h5l2 2.200h10A1.500 1.500 0 0 1 20 3.700v9.800a1.500 1.500 0 0 1-1.500 1.500h-17A1.500 1.500 0 0 1 0 13.500z" fill="#f0ad4e"/></svg><div class="c" style="left:39px">wp-admin</div><div class="c" style="left:354px">4 KB</div><div class="c ar" style="left:455px">الأمس <span class="l">12:51</span> م</div><div class="c" style="left:655px">httpd/unix-directory</div><div class="c" style="left:835px">0755</div></div>
<div class="row" style="top:396px;background:#f9f9f9"><svg style="left:4px;top:8px" width="20" height="15" viewBox="0 0 20 15"><path d="M0 1.500A1.500 1.500 0 0 1 1.500 0h5l2 2.200h10A1.500 1.500 0 0 1 20 3.700v9.800a1.500 1.500 0 0 1-1.500 1.500h-17A1.500 1.500 0 0 1 0 13.500z" fill="#f0ad4e"/></svg><div class="c" style="left:39px">wp-content</div><div class="c" style="left:354px">4 KB</div><div class="c ar" style="left:455px">الأمس <span class="l">12:53</span> م</div><div class="c" style="left:655px">httpd/unix-directory</div><div class="c" style="left:835px">0755</div></div>
<div class="row" style="top:427px;background:#fff"><svg style="left:4px;top:8px" width="20" height="15" viewBox="0 0 20 15"><path d="M0 1.500A1.500 1.500 0 0 1 1.500 0h5l2 2.200h10A1.500 1.500 0 0 1 20 3.700v9.800a1.500 1.500 0 0 1-1.500 1.500h-17A1.500 1.500 0 0 1 0 13.500z" fill="#f0ad4e"/></svg><div class="c" style="left:39px">wp-includes</div><div class="c" style="left:354px">12 KB</div><div class="c ar" style="left:455px">الأمس <span class="l">12:51</span> م</div><div class="c" style="left:655px">httpd/unix-directory</div><div class="c" style="left:835px">0755</div></div>
<div class="row" style="top:458px;background:#f9f9f9"><svg style="left:4px;top:4px" width="15" height="20" viewBox="0 0 15 20"><path d="M2 .900h7.300l4.800 4.800V18a1.200 1.200 0 0 1-1.200 1.200H2A1.200 1.200 0 0 1 .900 18V2A1.200 1.200 0 0 1 2 .900z" fill="#fff" stroke="#454a78" stroke-width="1.800"/><path d="M9.200 1v4.800h4.800" fill="none" stroke="#454a78" stroke-width="1.600"/><path d="M5 9.500L2.800 12.300 5 15.100M10 9.500l2.200 2.800L10 15.100M8.600 8.800l-2.200 7" fill="none" stroke="#454a78" stroke-width="1.500"/></svg><div class="c" style="left:39px">index.php</div><div class="c" style="left:354px">405</div><div class="c" style="left:455px">06<span class="m ar">م</span> 2:03 2020/02/</div><div class="c" style="left:655px">application/x-httpd-php</div><div class="c" style="left:835px">0644</div></div>
<div class="row" style="top:489px;background:#fff"><svg style="left:4px;top:4px" width="15" height="20" viewBox="0 0 15 19"><path d="M1.200 0h8.300L15 5.500V17.800A1.200 1.200 0 0 1 13.800 19H1.200A1.200 1.200 0 0 1 0 17.800V1.200A1.200 1.200 0 0 1 1.200 0z" fill="#6a5488"/><path d="M9.500 0v5.500H15z" fill="#b5a6c8"/><path d="M3.500 9.500h8M3.500 12.200h8M3.500 14.900h8" stroke="#cfc4dc" stroke-width="1.500"/></svg><div class="c" style="left:39px">license.txt</div><div class="c" style="left:354px">19.45 KB</div><div class="c" style="left:455px">12<span class="m ar">م</span> 7:24 2020/02/</div><div class="c" style="left:655px">text/plain</div><div class="c" style="left:835px">0644</div></div>
<div class="row" style="top:520px;background:#f9f9f9"><svg style="left:4px;top:4px" width="15" height="20" viewBox="0 0 15 20"><path d="M2 .900h7.300l4.800 4.800V18a1.200 1.200 0 0 1-1.200 1.200H2A1.200 1.200 0 0 1 .900 18V2A1.200 1.200 0 0 1 2 .900z" fill="#fff" stroke="#454a78" stroke-width="1.800"/><path d="M9.200 1v4.800h4.800" fill="none" stroke="#454a78" stroke-width="1.600"/><path d="M5 9.500L2.800 12.300 5 15.100M10 9.500l2.200 2.800L10 15.100M8.600 8.800l-2.200 7" fill="none" stroke="#454a78" stroke-width="1.500"/></svg><div class="c" style="left:39px">readme.html</div><div class="c" style="left:354px">7.11 KB</div><div class="c" style="left:455px">10<span class="m ar">م</span> 9:35 2020/01/</div><div class="c" style="left:655px">text/html</div><div class="c" style="left:835px">0644</div></div>
<div class="row" style="top:551px;background:#fff"><svg style="left:4px;top:4px" width="15" height="20" viewBox="0 0 15 20"><path d="M2 .900h7.300l4.800 4.800V18a1.200 1.200 0 0 1-1.200 1.200H2A1.200 1.200 0 0 1 .900 18V2A1.200 1.200 0 0 1 2 .900z" fill="#fff" stroke="#454a78" stroke-width="1.800"/><path d="M9.200 1v4.800h4.800" fill="none" stroke="#454a78" stroke-width="1.600"/><path d="M5 9.500L2.800 12.300 5 15.100M10 9.500l2.200 2.800L10 15.100M8.600 8.800l-2.200 7" fill="none" stroke="#454a78" stroke-width="1.500"/></svg><div class="c" style="left:39px">wp-activate.php</div><div class="c" style="left:354px">6.75 KB</div><div class="c" style="left:455px">06<span class="m ar">م</span> 2:03 2020/02/</div><div class="c" style="left:655px">application/x-httpd-php</div><div class="c" style="left:835px">0644</div></div>
<div class="row" style="top:582px;background:#f9f9f9"><svg style="left:4px;top:4px" width="15" height="20" viewBox="0 0 15 20"><path d="M2 .900h7.300l4.800 4.800V18a1.200 1.200 0 0 1-1.200 1.200H2A1.200 1.200 0 0 1 .900 18V2A1.200 1.200 0 0 1 2 .900z" fill="#fff" stroke="#454a78" stroke-width="1.800"/><path d="M9.200 1v4.800h4.800" fill="none" stroke="#454a78" stroke-width="1.600"/><path d="M5 9.500L2.800 12.300 5 15.100M10 9.500l2.200 2.800L10 15.100M8.600 8.800l-2.200 7" fill="none" stroke="#454a78" stroke-width="1.500"/></svg><div class="c" style="left:39px">wp-blog-header.php</div><div class="c" style="left:354px">351</div><div class="c" style="left:455px">06<span class="m ar">م</span> 2:03 2020/02/</div><div class="c" style="left:655px">application/x-httpd-php</div><div class="c" style="left:835px">0644</div></div>
<div class="row" style="top:613px;background:#fff"><svg style="left:4px;top:4px" width="15" height="20" viewBox="0 0 15 20"><path d="M2 .900h7.300l4.800 4.800V18a1.200 1.200 0 0 1-1.200 1.200H2A1.200 1.200 0 0 1 .900 18V2A1.200 1.200 0 0 1 2 .900z" fill="#fff" stroke="#454a78" stroke-width="1.800"/><path d="M9.200 1v4.800h4.800" fill="none" stroke="#454a78" stroke-width="1.600"/><path d="M5 9.500L2.800 12.300 5 15.100M10 9.500l2.200 2.800L10 15.100M8.600 8.800l-2.200 7" fill="none" stroke="#454a78" stroke-width="1.500"/></svg><div class="c" style="left:39px">wp-comments-post.php</div><div class="c" style="left:354px">2.22 KB</div><div class="c" style="left:455px">06<span class="m ar">م</span> 2:03 2020/02/</div><div class="c" style="left:655px">application/x-httpd-php</div><div class="c" style="left:835px">0644</div></div>
<div class="row" style="top:644px;background:#f9f9f9"><svg style="left:4px;top:4px" width="15" height="20" viewBox="0 0 15 20"><path d="M2 .900h7.300l4.800 4.800V18a1.200 1.200 0 0 1-1.200 1.200H2A1.200 1.200 0 0 1 .900 18V2A1.200 1.200 0 0 1 2 .900z" fill="#fff" stroke="#454a78" stroke-width="1.800"/><path d="M9.200 1v4.800h4.800" fill="none" stroke="#454a78" stroke-width="1.600"/><path d="M5 9.500L2.800 12.300 5 15.100M10 9.500l2.200 2.800L10 15.100M8.600 8.800l-2.200 7" fill="none" stroke="#454a78" stroke-width="1.500"/></svg><div class="c" style="left:39px">wp-config-sample.php</div><div class="c" style="left:354px">2.84 KB</div><div class="c" style="left:455px">06<span class="m ar">م</span> 2:03 2020/02/</div><div class="c" style="left:655px">application/x-httpd-php</div><div class="c" style="left:835px">0644</div></div>
<div class="row" style="top:675px;background:#fff"><svg style="left:4px;top:4px" width="15" height="20" viewBox="0 0 15 20"><path d="M2 .900h7.300l4.800 4.800V18a1.200 1.200 0 0 1-1.200 1.200H2A1.200 1.200 0 0 1 .900 18V2A1.200 1.200 0 0 1 2 .900z" fill="#fff" stroke="#454a78" stroke-width="1.800"/><path d="M9.200 1v4.800h4.800" fill="none" stroke="#454a78" stroke-width="1.600"/><path d="M5 9.500L2.800 12.300 5 15.100M10 9.500l2.200 2.800L10 15.100M8.600 8.800l-2.200 7" fill="none" stroke="#454a78" stroke-width="1.500"/></svg><div class="c" style="left:39px">wp-config.php</div><div class="c" style="left:354px">3.04 KB</div><div class="c ar" style="left:455px">الأمس <span class="l">12:51</span> م</div><div class="c" style="left:655px">application/x-httpd-php</div><div class="c" style="left:835px">0644</div></div>
<!-- focus outline -->
<div style="left:336px;top:304px;width:922px;height:1px;background:#2a2a2a"></div>
<div style="left:336px;top:304px;width:1px;height:404px;background:#2a2a2a"></div>
<!-- vertical scrollbar -->
<div style="left:1257px;top:304px;width:17px;height:404px;background:#f1f1f1"></div>
<div style="left:1260px;top:322px;width:12px;height:218px;background:#c1c1c1"></div>
<svg style="left:1262px;top:310px" width="8" height="5" viewBox="0 0 8 5"><path d="M0 5l4-5 4 5z" fill="#a3a3a3"/></svg>
<svg style="left:1262px;top:697px" width="8" height="5" viewBox="0 0 8 5"><path d="M0 0l4 5 4-5z" fill="#505050"/></svg>
<!-- horizontal scrollbar -->
<div style="left:337px;top:708px;width:937px;height:18px;background:#f1f1f1"></div>
<div style="left:353px;top:711px;width:877px;height:12px;background:#c1c1c1"></div>
<svg style="left:343px;top:713px" width="5" height="8" viewBox="0 0 5 8"><path d="M5 0L0 4l5 4z" fill="#a3a3a3"/></svg>
<div style="left:1257px;top:708px;width:17px;height:18px;background:#f8f8f8"></div>
<svg style="left:1247px;top:713px" width="5" height="8" viewBox="0 0 5 8"><path d="M0 0l5 4-5 4z" fill="#505050"/></svg>
<!--/RIGHT-->
<!-- ===== Taskbar ===== -->
<div id="taskbar"></div>
<!--TASKBAR-->
<!-- wallpaper tint seen through glass -->
<div style="left:0;top:729px;width:1280px;height:39px;background:radial-gradient(ellipse 160px 40px at 300px 25px,rgba(90,120,175,.45),transparent 70%),radial-gradient(ellipse 120px 50px at 820px 20px,rgba(120,90,150,.45),transparent 70%),radial-gradient(ellipse 140px 50px at 640px 30px,rgba(95,80,140,.35),transparent 70%),radial-gradient(ellipse 90px 40px at 1235px 25px,rgba(150,70,110,.35),transparent 70%)"></div>
<!-- show desktop -->
<div style="left:0;top:729px;width:13px;height:39px;border-right:1px solid rgba(190,205,230,.5);background:linear-gradient(90deg,rgba(0,0,0,.18),rgba(255,255,255,.12))"></div>
<!-- clock -->
<div class="ar" style="left:4px;width:90px;text-align:center;top:733px;height:16px;line-height:16px;font-size:13px;color:#fff">٠٨:٤٤ ص</div>
<div class="ar" style="left:4px;width:90px;text-align:center;top:749px;height:16px;line-height:16px;font-size:13px;color:#fff;direction:ltr">٤١/١٠/١٣</div>
<!-- tray -->
<svg style="left:91px;top:744px" width="14" height="10" viewBox="0 0 15 12" preserveAspectRatio="none"><path d="M0 10h2v2H0zM3.200 8h2v4h-2zM6.400 5.500h2V12h-2zM9.600 3h2v9h-2zM12.800 0h2v12h-2z" fill="#e9edf4"/></svg>
<svg style="left:114px;top:740px" width="16" height="15" viewBox="0 0 16 15"><path d="M0 5h3l4.500-4.500v14L3 10H0z" fill="#eef1f6"/><path d="M9.500 4.500a4 4 0 0 1 0 6M11.800 2.500a7 7 0 0 1 0 10" fill="none" stroke="#dfe5ee" stroke-width="1.300"/></svg>
<svg style="left:138px;top:739px" width="15" height="17" viewBox="0 0 15 17"><rect x="1" y="3" width="9" height="13" rx="1" fill="none" stroke="#eef1f6" stroke-width="1.600"/><rect x="3.500" y="1" width="4" height="2" fill="#eef1f6"/><rect x="3" y="8" width="5" height="6" fill="#eef1f6"/><path d="M11 4v4M14 4v4M10 8h5v2.500h-1.500V15h-2v-4.500H10z" fill="#eef1f6" stroke="#eef1f6" stroke-width="1"/></svg>
<svg style="left:167px;top:746px" width="7" height="4" viewBox="0 0 9 5"><path d="M0 5l4.500-5L9 5z" fill="#f1f3f7"/></svg>
<div style="left:189px;top:736px;height:18px;line-height:18px;font-size:12px;color:#fff">AR</div>
<!-- running app buttons -->
<div class="tb" style="left:667px"></div>
<div class="tb" style="left:728px"></div>
<div class="tb" style="left:852px;background:linear-gradient(180deg,rgba(255,255,255,.74),rgba(255,255,255,.62) 47%,rgba(255,255,255,.48) 52%,rgba(255,255,255,.56))"></div>
<div class="tb" style="left:976px"></div>
<!-- paint -->
<svg style="left:678px;top:733px" width="38" height="32" viewBox="0 0 38 32"><ellipse cx="17" cy="20" rx="15" ry="10" fill="#cfe1f3" stroke="#7fa3cf" stroke-width="1.500" transform="rotate(-12 17 20)"/><ellipse cx="21" cy="24" rx="4" ry="2.500" fill="#6f86ad"/><circle cx="8" cy="20" r="2.400" fill="#d7392e"/><circle cx="12" cy="14" r="2.400" fill="#e8a81c"/><circle cx="19" cy="12" r="2.400" fill="#53a646"/><circle cx="12" cy="25.500" r="2.200" fill="#3f6fd0"/><path d="M33 2l3 2L20 28l-3-2z" fill="#e98524"/><path d="M17 26l3 2-3.500 3.500z" fill="#7a4a20"/><path d="M33 2l3 2 1.500-3.500z" fill="#f5d9a8"/></svg>
<!-- sticky notes -->
<svg style="left:740px;top:735px" width="34" height="30" viewBox="0 0 34 30"><path d="M3 7l13-5 5 14-13 5z" fill="#8fcf6b"/><path d="M9 14l14-3 3 14-14 3z" fill="#9cc3ea"/><path d="M13 8l16-2 3 17-17 3z" fill="#f4d35e"/><path d="M13 8l16-2 .500 3-16 2z" fill="#f9e38f"/></svg>
<!-- yandex -->
<svg style="left:804px;top:732px" width="30" height="30" viewBox="0 0 30 30"><circle cx="15" cy="15" r="14.500" fill="#fff"/><path d="M8 6.500l7 9.500V25M22 6.500l-7 9.500" fill="none" stroke="#e8212b" stroke-width="3.200"/></svg>
<!-- chrome -->
<svg style="left:865px;top:733px" width="31" height="31" viewBox="0 0 31 31"><circle cx="15.500" cy="15.500" r="15" fill="#e33b2e"/><path d="M15.500 15.500L2.500 8A15 15 0 0 0 13 30.300z" fill="#2da94f"/><path d="M15.500 15.500L13 30.300A15 15 0 0 0 28.500 8z" fill="#fbc116"/><path d="M15.500 8.500H28.500A15 15 0 0 0 2.500 8z" fill="#e33b2e"/><circle cx="15.500" cy="15.500" r="7" fill="#fff"/><circle cx="15.500" cy="15.500" r="5.500" fill="#4a8af4"/></svg>
<!-- notepad -->
<svg style="left:926px;top:733px" width="32" height="30" viewBox="0 0 32 30"><path d="M8 2l20 3-5 23-21-4z" fill="#d6e9f8" stroke="#7fa8cf" stroke-width="1"/><path d="M8 2l20 3-1 4.500-20-3z" fill="#8fb4da"/><path d="M6 10l18 3M5 14l18 3M4 18l18 3" stroke="#9cc0e2" stroke-width="1"/><path d="M28 5l2 1-5 23-2-1z" fill="#6f94bd"/></svg>
<!-- firefox -->
<svg style="left:989px;top:732px" width="32" height="32" viewBox="0 0 32 32"><circle cx="16" cy="17" r="14.500" fill="#ff7a1a"/><path d="M16 2.500c4 2 8 4 10 9s1 10-2 14c3-8-1-13-6-14-2-3-2-6-2-9z" fill="#ffc53d"/><path d="M3 11c3-5 6-5 8-4 0 3 2 5 5 5 0 2-2 3-3 3.500 1 3 4 4 6 3-1 3-4 5-8 4.500S2 18 3 11z" fill="#e0314b"/><circle cx="17" cy="17" r="6" fill="#7b3fe4"/><path d="M13 13c2-2 6-2 8 0s2 6 0 8c1-4-2-8-8-8z" fill="#b24ad8"/></svg>
<!-- explorer -->
<svg style="left:1050px;top:733px" width="33" height="31" viewBox="0 0 33 31"><path d="M1 4a2 2 0 0 1 2-2h9l2 3h16a2 2 0 0 1 2 2v17H1z" fill="#e9bf55"/><path d="M3 8h27v14H3z" fill="#f8e7a6"/><path d="M1 11h31v13a2 2 0 0 1-2 2H3a2 2 0 0 1-2-2z" fill="#f3d371"/><path d="M6 19h21l3 9H3z" fill="#7fb6e6"/><path d="M9 22h15v8H9z" fill="#a9d2f3"/><circle cx="5" cy="5" r="1.200" fill="#4aa84a"/><circle cx="9" cy="5" r="1.200" fill="#d9534f"/></svg>
<!-- media player -->
<svg style="left:1114px;top:736px" width="27" height="26" viewBox="0 0 27 26"><path d="M1 3l21-2 4 2v20l-4 2H1z" fill="#6fb1e4"/><path d="M22 1l4 2v20l-4 2z" fill="#3f7fc0"/><circle cx="11.500" cy="13" r="9" fill="#f47b20" stroke="#fff" stroke-width="1.200"/><path d="M8.500 8l8 5-8 5z" fill="#fff"/></svg>
<!-- IE -->
<svg style="left:1174px;top:731px" width="32" height="32" viewBox="0 0 32 32"><path d="M27 20H10.500c.300 3 2.500 5 5.500 5 2.200 0 4-1 5-2.800h5.500C25 27 21 30 16 30 9.500 30 5 25.200 5 19S9.500 8 16 8c7 0 11.500 5.500 11 12zM10.700 16.500H21.300c-.500-2.800-2.500-4.500-5.300-4.500s-4.800 1.700-5.300 4.500z" fill="#35b7f1"/><path d="M3 29C-1 22 8 9 20 3c6-3 10-2 10 2-1-2-4-2-9 .500C11 11 3 22 5.500 27.500z" fill="#f6b526"/></svg>
<!-- start orb -->
<svg style="left:1233px;top:729px" width="40" height="40" viewBox="0 0 40 40"><defs><radialGradient id="orb" cx=".5" cy=".75" r=".7"><stop offset="0" stop-color="#5fc3f2"/><stop offset=".55" stop-color="#2a6fc0"/><stop offset="1" stop-color="#173f83"/></radialGradient></defs><circle cx="20" cy="20" r="19" fill="url(#orb)" stroke="#9fb9de" stroke-width="1.500"/><path d="M4 14A17.500 17.500 0 0 1 36 14C26 18 14 18 4 14z" fill="rgba(255,255,255,.28)"/><path d="M10.500 11.500c3-1.500 5.500-1.500 8 0l-1.800 7c-2.500-1.500-5-1.500-8 0z" fill="#e8502e"/><path d="M20.500 12.500c2.500 1.500 5 1.500 8 0l-1.800 7c-3 1.500-5.500 1.500-8 0z" fill="#7fc241"/><path d="M8.300 20.500c3-1.500 5.500-1.500 8 0l-1.800 7c-2.500-1.500-5-1.500-8 0z" fill="#3c9df0"/><path d="M18.300 21.500c2.500 1.500 5 1.500 8 0l-1.800 7c-3 1.500-5.500 1.500-8 0z" fill="#fbc52e"/></svg>
<!--/TASKBAR-->
</div>
</body>
</html>
